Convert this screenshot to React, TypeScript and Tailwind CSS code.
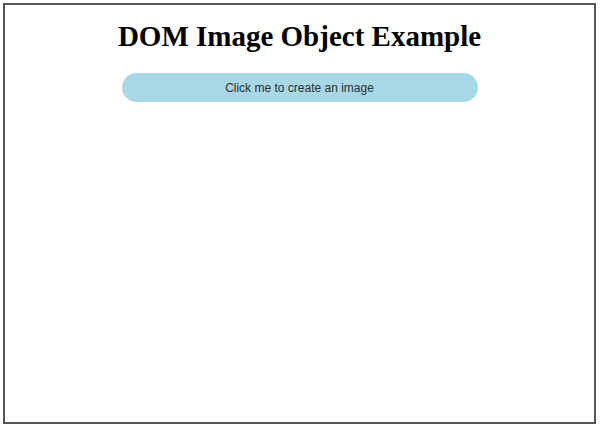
export default function App() {
  return (
    <div className="w-[600px] h-[428px] bg-white pt-[3px] pl-[3px]">
      <div className="w-[593px] h-[421px] border-2 border-[#555] flex flex-col items-center">
        <h1 className="mt-[13px] text-[29px] leading-[36px] font-bold text-black [font-family:'Liberation_Serif',serif]">
          DOM Image Object Example
        </h1>
        <button className="mt-[19px] w-[356px] h-[29px] rounded-full bg-[#a8d7e6] text-[12px] text-[#2a2f33] [font-family:'Liberation_Sans',sans-serif]">
          Click me to create an image
        </button>
      </div>
    </div>
  )
}
